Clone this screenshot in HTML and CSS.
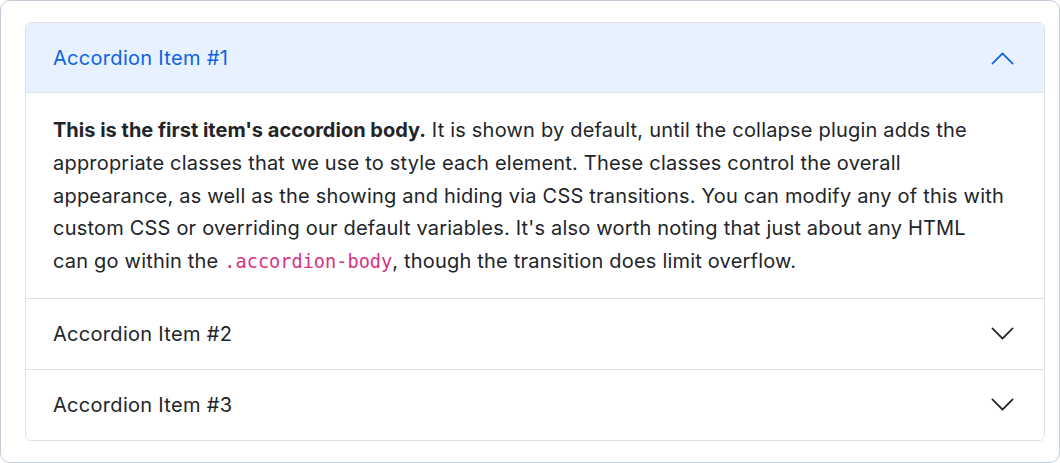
FILE: index.html
```html
<!DOCTYPE html>
<html lang="en">
<head>
<meta charset="utf-8">
<title>Accordion</title>
<link rel="stylesheet" href="styles.css">
</head>
<body>
<div class="frame">
  <div class="accordion">
    <div class="item">
      <h2 class="header">
        <button class="button active" type="button">
          <span class="label">Accordion Item #1</span>
          <svg class="chev up" viewBox="0 0 16 16" aria-hidden="true"><path fill-rule="evenodd" d="M1.646 4.646a.5.5 0 0 1 .708 0L8 10.293l5.646-5.647a.5.5 0 0 1 .708.708l-6 6a.5.5 0 0 1-.708 0l-6-6a.5.5 0 0 1 0-.708z"/></svg>
        </button>
      </h2>
      <div class="body">
        <strong>This is the first item's accordion body.</strong> It is shown by default, until the collapse plugin adds the appropriate classes that we use to style each element. These classes control the overall appearance, as well as the showing and hiding via CSS transitions. You can modify any of this with custom CSS or overriding our default variables. It's also worth noting that just about any HTML can&nbsp;go within the <code>.accordion-body</code>, though the transition does limit overflow.
      </div>
    </div>
    <div class="item">
      <h2 class="header">
        <button class="button" type="button">
          <span class="label">Accordion Item #2</span>
          <svg class="chev" viewBox="0 0 16 16" aria-hidden="true"><path fill-rule="evenodd" d="M1.646 4.646a.5.5 0 0 1 .708 0L8 10.293l5.646-5.647a.5.5 0 0 1 .708.708l-6 6a.5.5 0 0 1-.708 0l-6-6a.5.5 0 0 1 0-.708z"/></svg>
        </button>
      </h2>
    </div>
    <div class="item">
      <h2 class="header">
        <button class="button" type="button">
          <span class="label">Accordion Item #3</span>
          <svg class="chev" viewBox="0 0 16 16" aria-hidden="true"><path fill-rule="evenodd" d="M1.646 4.646a.5.5 0 0 1 .708 0L8 10.293l5.646-5.647a.5.5 0 0 1 .708.708l-6 6a.5.5 0 0 1-.708 0l-6-6a.5.5 0 0 1 0-.708z"/></svg>
        </button>
      </h2>
    </div>
  </div>
</div>
</body>
</html>
```
FILE: styles.css
```css
* { box-sizing: border-box; }
html, body { margin: 0; padding: 0; background: #ffffff; }
body {
  font-family: Inter, "Noto Sans", "Liberation Sans", sans-serif;
  color: #212529;
}
.frame {
  width: 1060px;
  height: 463px;
  border: 1px solid #c3ccd6;
  border-radius: 10px;
  padding: 21px 14px 21px 24px;
}
.accordion {
  border: 1px solid #dfdfdf;
  border-radius: 6px;
  overflow: hidden;
}
.item + .item { border-top: 1px solid #dfdfdf; }
.header { margin: 0; }
.button {
  display: flex;
  align-items: center;
  justify-content: space-between;
  width: 100%;
  height: 70px;
  padding: 0 28px 0 27px;
  border: 0;
  background: #ffffff;
  font-family: inherit;
  font-size: 20px;
  font-weight: 400;
  letter-spacing: 0.3px;
  line-height: 30px;
  color: #212529;
  text-align: left;
}
.button.active {
  background: #e7f1ff;
  color: #0c63e4;
  box-shadow: inset 0 -1px 0 #dbe1ea;
}
.chev {
  width: 27px;
  height: 27px;
  fill: #212529;
}
.chev.up {
  transform: rotate(180deg);
  fill: #0c63e4;
}
.body {
  padding: 21px 27px 19px 27px;
  font-size: 20px;
  letter-spacing: 0.2px;
  line-height: 32.8px;
}
.body strong { font-weight: 700; letter-spacing: 0; }
code {
  font-family: "DejaVu Sans Mono", "Liberation Mono", monospace;
  font-size: 18.6px;
  letter-spacing: 0;
  color: #d63384;
}
```
